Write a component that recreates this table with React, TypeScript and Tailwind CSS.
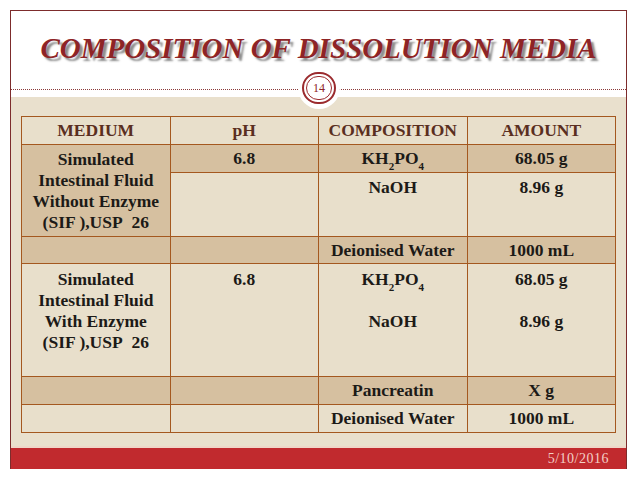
const serif = { fontFamily: '"Liberation Serif", "Times New Roman", serif' };

const KH2PO4 = () => (
  <span>
    KH<sub className="text-[11px] leading-none align-[-3px]">2</sub>PO
    <sub className="text-[11px] leading-none align-[-3px]">4</sub>
  </span>
);

const cell = "border border-[#a4581f] text-center px-1";
const head = "border border-[#a4581f] text-center px-1 text-[#5a2e20]";
const dark = "bg-[#d6c0a0]";
const light = "bg-[#e8dfcb]";

export default function App() {
  return (
    <div className="w-[638px] h-[479px] bg-white pt-[10px] pl-[10px]" style={serif}>
      <div className="relative w-[617px] border border-b-0 border-[#7d2c2c]">
        {/* title area */}
        <div className="h-[86px] flex flex-col">
          <h1
            className="pt-[23px] text-center text-[29px] leading-[29px] font-bold italic text-[#8e2426]"
            style={{ textShadow: "3px 3px 2px rgba(110,110,110,0.8)" }}
          >
            COMPOSITION OF DISSOLUTION MEDIA
          </h1>
          <div className="mt-[26px] border-t border-dotted border-[#8b3a3a]"></div>
        </div>

        {/* page number badge */}
        <div className="absolute left-[287px] top-[56px] w-[42px] h-[42px] rounded-full bg-white flex items-center justify-center">
          <div className="w-[34px] h-[32px] rounded-full border-2 border-[#9b2b2e] flex items-center justify-center">
            <div className="w-[26px] h-[24px] rounded-full border border-[#9b2b2e] flex items-center justify-center text-[12px] text-[#8e2426]">
              14
            </div>
          </div>
        </div>

        {/* content */}
        <div className="h-[349px] bg-[#e9e0cd] pt-[19px] pl-[10px]">
          <table className="w-[595px] table-fixed border-collapse text-[17.5px] leading-[21px] font-bold text-[#1c1a17]">
            <tbody>
              <tr className="h-[28px] bg-[#e8dfcb]">
                <td className={head}>MEDIUM</td>
                <td className={head}>pH</td>
                <td className={head}>COMPOSITION</td>
                <td className={head}>AMOUNT</td>
              </tr>
              <tr className="h-[28px]">
                <td rowSpan={2} className={`${cell} ${dark} align-middle`}>
                  Simulated
                  <br />
                  Intestinal Fluid
                  <br />
                  Without Enzyme
                  <br />
                  (SIF ),USP&nbsp; 26
                </td>
                <td className={`${cell} ${dark}`}>6.8</td>
                <td className={`${cell} ${dark}`}>
                  <KH2PO4 />
                </td>
                <td className={`${cell} ${dark}`}>68.05 g</td>
              </tr>
              <tr className="h-[64px]">
                <td className={`${cell} ${light}`}></td>
                <td className={`${cell} ${light} align-top pt-1`}>NaOH</td>
                <td className={`${cell} ${light} align-top pt-1`}>8.96 g</td>
              </tr>
              <tr className="h-[27px]">
                <td className={`${cell} ${dark}`}></td>
                <td className={`${cell} ${dark}`}></td>
                <td className={`${cell} ${dark}`}>Deionised Water</td>
                <td className={`${cell} ${dark}`}>1000 mL</td>
              </tr>
              <tr className="h-[113px]">
                <td className={`${cell} ${light} align-top pt-[5px]`}>
                  Simulated
                  <br />
                  Intestinal Fluid
                  <br />
                  With Enzyme
                  <br />
                  (SIF ),USP&nbsp; 26
                </td>
                <td className={`${cell} ${light} align-top pt-[5px]`}>6.8</td>
                <td className={`${cell} ${light} align-top pt-[5px]`}>
                  <KH2PO4 />
                  <br />
                  <br />
                  NaOH
                </td>
                <td className={`${cell} ${light} align-top pt-[5px]`}>
                  68.05 g
                  <br />
                  <br />
                  8.96 g
                </td>
              </tr>
              <tr className="h-[28px]">
                <td className={`${cell} ${dark}`}></td>
                <td className={`${cell} ${dark}`}></td>
                <td className={`${cell} ${dark}`}>Pancreatin</td>
                <td className={`${cell} ${dark}`}>X g</td>
              </tr>
              <tr className="h-[28px]">
                <td className={`${cell} ${light}`}></td>
                <td className={`${cell} ${light}`}></td>
                <td className={`${cell} ${light}`}>Deionised Water</td>
                <td className={`${cell} ${light}`}>1000 mL</td>
              </tr>
            </tbody>
          </table>
        </div>

        {/* footer */}
        <div className="h-[2px] bg-[#efd6c8]"></div>
        <div className="h-[21px] bg-[#c12a2e] flex items-center justify-end pr-[17px]">
          <span className="text-[14px] text-[#f3cfc6] tracking-[0.5px]">5/10/2016</span>
        </div>
      </div>
    </div>
  );
}
